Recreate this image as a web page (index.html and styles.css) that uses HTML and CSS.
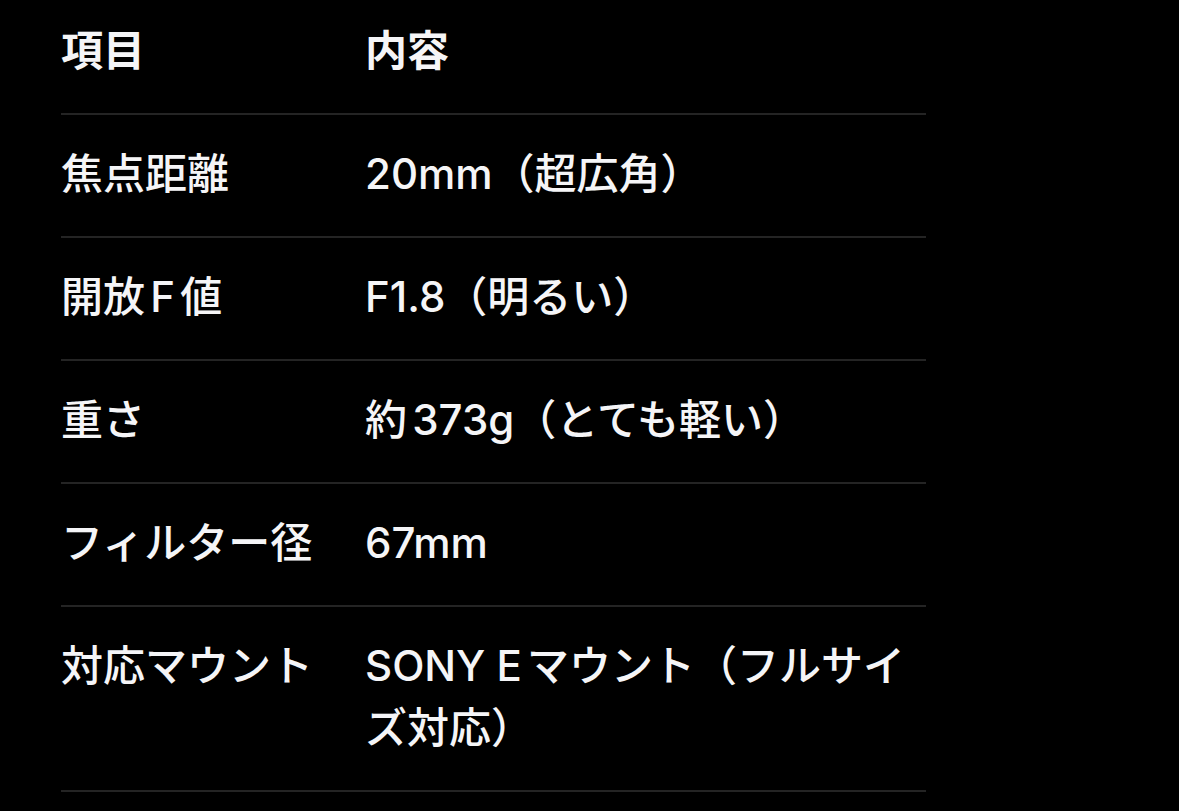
FILE: index.html
```html
<!DOCTYPE html>
<html lang="ja">
<head>
<meta charset="utf-8">
<title>スペック</title>
<link rel="stylesheet" href="styles.css">
</head>
<body>
<div class="spec">
  <div class="row head">
    <div class="cell key">項目</div>
    <div class="cell val">内容</div>
  </div>
  <div class="row">
    <div class="cell key">焦点距離</div>
    <div class="cell val">20mm（超広角）</div>
  </div>
  <div class="row">
    <div class="cell key">開放F値</div>
    <div class="cell val">F1.8（明るい）</div>
  </div>
  <div class="row">
    <div class="cell key">重さ</div>
    <div class="cell val">約373g（とても軽い）</div>
  </div>
  <div class="row">
    <div class="cell key">フィルター径</div>
    <div class="cell val">67mm</div>
  </div>
  <div class="row">
    <div class="cell key">対応マウント</div>
    <div class="cell val">SONY Eマウント（フルサイズ対応）</div>
  </div>
</div>
</body>
</html>
```

FILE: styles.css
```css
html, body {
  margin: 0;
  padding: 0;
  background: #000;
}

body {
  color: #f5f5f7;
  font-family: Inter, "Noto Sans CJK JP", "Noto Sans", sans-serif;
  font-size: 42px;
  line-height: 62px;
  font-weight: 500;
  text-autospace: normal;
}

.spec {
  width: 865px;
  margin-left: 61px;
}

.row {
  display: grid;
  grid-template-columns: 304px 1fr;
  padding: 28px 0 31px;
  border-bottom: 2px solid #242424;
}

.row.head {
  padding-top: 20px;
  font-weight: 700;
}

.cell {
  min-width: 0;
}
```
